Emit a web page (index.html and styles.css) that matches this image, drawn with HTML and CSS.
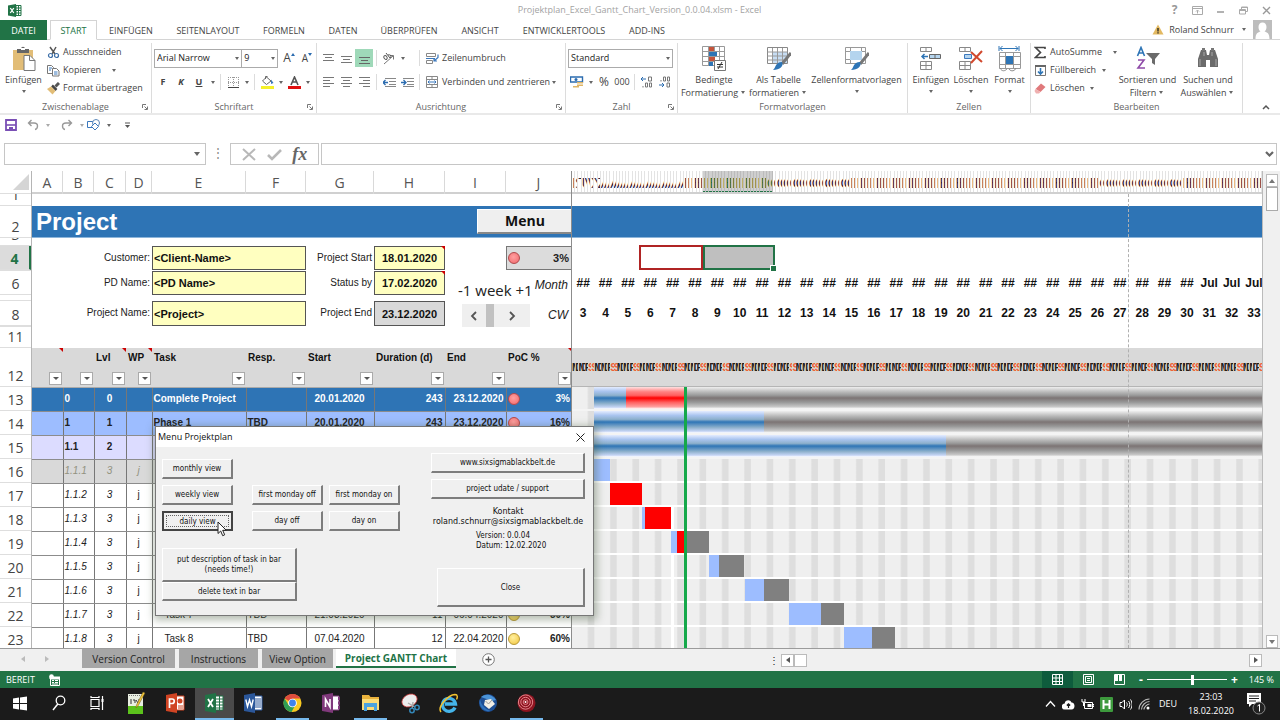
FILE: index.html
```html
<!DOCTYPE html>
<html lang="de">
<head>
<meta charset="utf-8">
<meta name="viewport" content="width=device-width, initial-scale=1">
<title>Projektplan_Excel_Gantt_Chart_Version_0.0.04.xlsm - Excel</title>
<link rel="stylesheet" href="styles.css">
</head>
<body>
<div class="app">
<header class="titlebar">
  <svg class="logo" width="14" height="13" viewBox="0 0 14 13"><path d="M8 1.500h5v10H8z" fill="#fff" stroke="#217346"/><path d="M8 4h5M8 6.500h5M8 9h5M10.500 2v9" stroke="#217346"/><path d="M0 1.500 8 0v13L0 11.500z" fill="#217346"/><path d="m2.300 4 3.500 5M5.800 4 2.300 9" stroke="#fff" stroke-width="1.300"/></svg>
  <div class="doc">Projektplan_Excel_Gantt_Chart_Version_0.0.04.xlsm - Excel</div>
  <div class="wbtns">
    <button aria-label="Hilfe">?</button>
    <button aria-label="Menüband-Anzeigeoptionen"><svg width="11" height="9" viewBox="0 0 11 9"><path d="M.5.500h10v8H.500zM.500 2.500h10M5.500 7.500v-3M4 5.500l1.500-1.500L7 5.500" fill="none" stroke="#aaa"/></svg></button>
    <button aria-label="Minimieren"><svg width="9" height="9" viewBox="0 0 9 9"><path d="M1 6h7" stroke="#999" stroke-width="1.500"/></svg></button>
    <button aria-label="Wiederherstellen"><svg width="9" height="9" viewBox="0 0 9 9"><path d="M.5 3.500h6v4.500h-6zM.500 4.500h6M2.500 3V1h6v4.500H7M2.500 1.500h6" fill="none" stroke="#aaa"/></svg></button>
    <button aria-label="Schließen"><svg width="9" height="9" viewBox="0 0 9 9"><path d="m1 1 7 7M8 1 1 8" stroke="#999" stroke-width="1.400"/></svg></button>
  </div>
</header>
<nav class="tabs">
  <button class="file">DATEI</button><button class="on">START</button><button class="t1">EINFÜGEN</button><button class="t2">SEITENLAYOUT</button><button class="t3">FORMELN</button><button class="t4">DATEN</button><button class="t5">ÜBERPRÜFEN</button><button class="t6">ANSICHT</button><button class="t7">ENTWICKLERTOOLS</button><button class="t8">ADD-INS</button>
  <div class="user"><svg width="12" height="11" viewBox="0 0 12 11"><path d="M6 .5 11.500 10.500H.500z" fill="#e3b961"/><path d="M6 4v3.500M6 8.300v1.200" stroke="#222" stroke-width="1.300"/></svg><span>Roland Schnurr</span><i class="car"></i>
  <svg width="19" height="19" viewBox="0 0 19 19"><path fill="#bdbdbd" d="M0 0h19v19H0z"/><path fill="#fff" d="M9.500 2.500c2.500 0 4 1.800 4 4.500 0 2-.8 3.500-2 4.500 2.500.8 5 1.500 5 7.500h-14c0-6 2.500-6.700 5-7.500-1.200-1-2-2.500-2-4.500 0-2.700 1.500-4.500 4-4.500z"/></svg></div>
</nav>

<section class="ribbon">
  <div class="grp g1">
    <div class="body">
      <button class="big"><svg width="24" height="26" viewBox="0 0 24 26"><path d="M1 4h20v20H1z" fill="#e2bd77"/><path d="M5 3h4c0-3 4-3 4 0h4v4H5z" fill="#666"/><path d="M9 2h4v2H9z" fill="#fff"/><path d="M12 9.500h6l5 5v10H12z" fill="#fff" stroke="#777"/><path d="M17.500 9.500v5H23" fill="none" stroke="#777"/></svg><span>Einfügen</span><i class="car"></i></button>
      <div class="col">
        <button><svg width="13" height="13" viewBox="0 0 13 13"><path d="M3 1l5 7M9 1 5 8" stroke="#555" stroke-width="1.500"/><circle cx="3.500" cy="9.500" r="2" fill="none" stroke="#3b6ea8" stroke-width="1.200"/><circle cx="9.500" cy="9.500" r="2" fill="none" stroke="#3b6ea8" stroke-width="1.200"/></svg>Ausschneiden</button>
        <button><svg width="13" height="13" viewBox="0 0 13 13"><path d="M.5 1.500h4l2 2v6h-6z" fill="#fff" stroke="#777"/><path d="M2 4h3M2 6h2" stroke="#3b78bd"/><path d="M5.500 4.500h4l2.500 2.500v5H5.500z" fill="#fff" stroke="#777"/><path d="M7 8h3.500M7 10h3.500" stroke="#3b78bd"/></svg>Kopieren<i class="car far"></i></button>
        <button><svg width="13" height="13" viewBox="0 0 13 13"><path d="M12 1 8.500 4.500" stroke="#555" stroke-width="3"/><path d="m5 3.500 4.500 4.500" stroke="#444" stroke-width="2.500"/><path d="M4 4.500 8.500 9l-3 3.500L0 7z" fill="#e2bd77"/></svg>Format übertragen</button>
      </div>
    </div>
    <div class="cap">Zwischenablage<svg class="lau" width="6" height="6" viewBox="0 0 6 6"><path d="M.5 4V.500H4M2.500 2.500 5 5M5.500 2.500v3h-3" fill="none" stroke="#777"/></svg></div>
  </div>
  <div class="grp g2">
    <div class="body rows">
      <div class="line"><span class="sel w90"><select aria-label="Schriftart"><option>Arial Narrow</option></select><i class="car"></i></span><span class="sel w35"><select aria-label="Schriftgrad"><option>9</option></select><i class="car"></i></span><button class="ib aup">A<svg width="4" height="3"><path d="M0 3 2 0l2 3z" fill="#2b6cb0"/></svg></button><button class="ib adn">A<svg width="4" height="3"><path d="M0 0h4L2 3z" fill="#2b6cb0"/></svg></button></div>
      <div class="line"><button class="ib"><b>F</b></button><button class="ib"><b><em>K</em></b></button><button class="ib"><b><u>U</u></b></button><i class="car"></i><i class="sep"></i><button class="ib" aria-label="Rahmen"><svg width="11" height="11" viewBox="0 0 11 11"><path d="M.5 0v10M5.500 0v10M10.500 0v10M0 .500h11M0 5.500h11" stroke="#999" stroke-dasharray="1 1"/><path d="M0 10.500h11" stroke="#444"/></svg></button><i class="car"></i><i class="sep"></i><button class="ib" aria-label="Füllfarbe"><svg width="13" height="13" viewBox="0 0 13 13"><path d="M5.500 1 10 5 5.500 8.500 1.500 5z" fill="#fff" stroke="#666"/><path d="M4.500 3V.500h2" stroke="#666" fill="none"/><path d="M10 3.500 12.500 7 10 8z" fill="#3b78bd"/><path d="M0 10h13v3H0z" fill="#f5f12a"/></svg></button><i class="car"></i><button class="ib" aria-label="Schriftfarbe"><svg width="13" height="13" viewBox="0 0 13 13"><path d="m3 9 3.500-8L10 9M4.500 6h4" fill="none" stroke="#555" stroke-width="1.600"/><path d="M0 10h13v3H0z" fill="#e01010"/></svg></button><i class="car"></i></div>
    </div>
    <div class="cap">Schriftart<svg class="lau" width="6" height="6" viewBox="0 0 6 6"><path d="M.5 4V.500H4M2.500 2.500 5 5M5.500 2.500v3h-3" fill="none" stroke="#777"/></svg></div>
  </div>
  <div class="grp g3">
    <div class="body rows">
      <div class="line"><button class="ib" aria-label="Oben"><svg width="11" height="11"><path d="M0 1.500h11M2 4.500h7M0 7.500h11" stroke="#777"/></svg></button><button class="ib" aria-label="Mitte"><svg width="11" height="11"><path d="M0 3.500h11M2 6.500h7M0 9.500h11" stroke="#777"/></svg></button><button class="ib act" aria-label="Unten"><svg width="11" height="11"><path d="M0 4.500h11M2 7.500h7M0 10.500h11" stroke="#666"/></svg></button><i class="sep"></i><button class="ib" aria-label="Ausrichtung"><svg width="14" height="13" viewBox="0 0 14 13"><path d="M2 12 11 4M11.500 7.500V3.500H8" fill="none" stroke="#777"/><ellipse cx="3.500" cy="5.500" rx="1.500" ry="2" fill="none" stroke="#555" transform="rotate(-40 3.500 5.500)"/><path d="m4 1 4 5c2-1 1-4-2-3" fill="none" stroke="#555"/></svg></button><i class="car"></i><i class="pad8"></i><i class="sep"></i><button class="tx"><svg width="13" height="13" viewBox="0 0 13 13"><path d="M.5 1.500h9v3h-9zM.500 8.500h6v3h-6z" fill="#fff" stroke="#888"/><path d="M0 6.500h9" stroke="#3b78bd"/><path d="M12 2.500v3L8 9M8 6.500V9h3" fill="none" stroke="#3b78bd" stroke-width="1.200"/></svg>Zeilenumbruch</button></div>
      <div class="line"><button class="ib" aria-label="Links"><svg width="11" height="11"><path d="M0 .5h11M0 3.500h7M0 6.500h11M0 9.500h7" stroke="#777"/></svg></button><button class="ib" aria-label="Zentriert"><svg width="11" height="11"><path d="M0 .5h11M2 3.500h7M0 6.500h11M2 9.500h7" stroke="#777"/></svg></button><button class="ib" aria-label="Rechts"><svg width="11" height="11"><path d="M0 .5h11M4 3.500h7M0 6.500h11M4 9.500h7" stroke="#777"/></svg></button><i class="sep"></i><button class="ib" aria-label="Einzug verkleinern"><svg width="13" height="11" viewBox="0 0 13 11"><path d="M2 1.500h11M6 4.500h7M6 7.500h7M2 9.500h11" stroke="#888"/><path d="M0 5.500h5M2.500 3 0 5.500 2.500 8" fill="none" stroke="#2b6cb0" stroke-width="1.300"/></svg></button><button class="ib" aria-label="Einzug vergrößern"><svg width="13" height="11" viewBox="0 0 13 11"><path d="M2 1.500h11M6 4.500h7M6 7.500h7M2 9.500h11" stroke="#888"/><path d="M0 5.500h5M2.500 3 5 5.500 2.500 8" fill="none" stroke="#2b6cb0" stroke-width="1.300"/></svg></button><i class="sep"></i><button class="tx"><svg width="13" height="13" viewBox="0 0 13 13"><path d="M.5.500h11v11H.500zM.500 3.500h11M.500 8.500h11M6 .500v3M6 8.500v3" fill="none" stroke="#888"/><path d="M2 6h8M3.500 4.500 2 6l1.500 1.500M8.500 4.500 10 6 8.500 7.500" fill="none" stroke="#3b78bd"/></svg>Verbinden und zentrieren</button><i class="car"></i></div>
    </div>
    <div class="cap">Ausrichtung<svg class="lau" width="6" height="6" viewBox="0 0 6 6"><path d="M.5 4V.500H4M2.500 2.500 5 5M5.500 2.500v3h-3" fill="none" stroke="#777"/></svg></div>
  </div>
  <div class="grp g4">
    <div class="body rows">
      <div class="line"><span class="sel w105"><select aria-label="Zahlenformat"><option>Standard</option></select><i class="car"></i></span></div>
      <div class="line"><button class="ib" aria-label="Währung"><svg width="14" height="13" viewBox="0 0 14 13"><path d="M.5 1h12v5H.500z" fill="#fff" stroke="#2b6cb0" stroke-width="1.400"/><circle cx="6" cy="3.500" r="1.500" fill="#2b6cb0"/><path d="M7 6h6v1.500H7zM7 8.500h6V10H7zM3 10h6v1.500H3z" fill="#dfb566"/></svg></button><i class="car"></i><button class="ib pct">%</button><button class="ib zz">000</button><i class="sep"></i><button class="ib" aria-label="Dezimalstelle hinzufügen"><svg width="12" height="12" viewBox="0 0 12 12"><path d="M0 3h5M2 1 0 3l2 2" stroke="#2b6cb0" fill="none"/><path d="M7.500 1h3v4h-3zM4.500 7h2v4h-2zM8.500 7h2v4h-2zM2 10v1.500" fill="none" stroke="#777"/></svg></button><button class="ib" aria-label="Dezimalstelle löschen"><svg width="12" height="12" viewBox="0 0 12 12"><path d="M0 9h5M3 7l2 2-2 2" stroke="#2b6cb0" fill="none"/><path d="M4.500 1h2v4h-2zM8.500 1h2v4h-2zM8 7h2.500v4H8zM2 4v1.500" fill="none" stroke="#777"/></svg></button></div>
    </div>
    <div class="cap">Zahl<svg class="lau" width="6" height="6" viewBox="0 0 6 6"><path d="M.5 4V.500H4M2.500 2.500 5 5M5.500 2.500v3h-3" fill="none" stroke="#777"/></svg></div>
  </div>
  <div class="grp g5">
    <div class="body">
      <button class="big w65"><svg width="24" height="26" viewBox="0 0 24 26"><path d="M.5.500h22v19H.500zM.500 5.500h22M.500 10.500h22M.500 15.500h22M6.500.500v19M12.500.500v19M17.500.500v19" fill="#fff" stroke="#999"/><path d="M7 1h5v4H7zM7 11h6v4H7z" fill="#c5533a"/><path d="M7 6h8v4H7zM7 16h4v4H7z" fill="#2e75b6"/><path d="M12.500 14.500h11v10h-11z" fill="#fff" stroke="#777"/><path d="M15 18.500h6M15 21h6M20 16l-4 7" stroke="#333"/></svg><span>Bedingte<br>Formatierung<i class="car"></i></span></button>
      <button class="big w64"><svg width="24" height="26" viewBox="0 0 24 26"><path d="M.5 1.500h20v16H.500z" fill="#fff" stroke="#888"/><path d="M5 6h15v11H5z" fill="#c7ddf3"/><path d="M.5 6h20M.500 10h20M.500 14h20M5.500 2v15M10.500 2v15M15.500 2v15" stroke="#999" fill="none"/><path d="M24 7 15 18" stroke="#777" stroke-width="3"/><path d="M15 16c2 4-2 8-9 8 3-2 2-8 9-8z" fill="#2e75b6"/></svg><span>Als Tabelle<br>formatieren<i class="car"></i></span></button>
      <button class="big w92"><svg width="24" height="26" viewBox="0 0 24 26"><path d="M.5 1.500h20v16H.500zM.500 5.500h20M.500 13.500h20M5.500 2v15M16.500 2v15" fill="#fff" stroke="#999"/><path d="M5 5h12v9H5z" fill="#b4d4ee"/><path d="M24 7 15 18" stroke="#777" stroke-width="3"/><path d="M15 16c2 4-2 8-9 8 3-2 2-8 9-8z" fill="#2e75b6"/></svg><span>Zellenformatvorlagen</span><i class="car"></i></button>
    </div>
    <div class="cap">Formatvorlagen</div>
  </div>
  <div class="grp g6">
    <div class="body">
      <button class="big w40"><svg width="22" height="26" viewBox="0 0 22 26"><path d="M.5 1.500h11v4H.500zM6 1.500v4M.500 15.500h11v8H.500zM.500 19.500h11M6 15.500v8" fill="#fff" stroke="#888"/><path d="M9.500 8.500h11v4h-11zM15 8.500v4" fill="#b4d4ee" stroke="#666"/><path d="M2 10.500h6M4.500 8 2 10.500 4.500 13" fill="none" stroke="#2e75b6" stroke-width="1.500"/></svg><span>Einfügen</span><i class="car"></i></button>
      <button class="big w40"><svg width="24" height="26" viewBox="0 0 24 26"><path d="M.5 1.500h11v4H.500zM6 1.500v4M.500 15.500h11v8H.500zM.500 19.500h11M6 15.500v8" fill="#fff" stroke="#888"/><path d="M5.500 8.500h7v4h-7z" fill="#b4d4ee" stroke="#3b78bd"/><path d="m12 6 11 10M23 5 12 17" stroke="#d1492e" stroke-width="2"/></svg><span>Löschen</span><i class="car"></i></button>
      <button class="big w38"><svg width="24" height="26" viewBox="0 0 24 26"><path d="M2 2.500h18M4.500 0 2 2.500 4.500 5M17.500 0 20 2.500 17.500 5M1 0v5M21 0v5" fill="none" stroke="#2e75b6"/><path d="M1.500 6.500h21v16h-21zM1.500 10.500h21M1.500 18.500h21M7.500 6.500v16M15.500 6.500v16" fill="#fff" stroke="#999"/><path d="M8 10h7v8H8z" fill="#2e75b6"/><path d="M2 22c2 4 5 3 7 1M11 23c2 3 6 2 7-1" fill="none" stroke="#888"/></svg><span>Format</span><i class="car"></i></button>
    </div>
    <div class="cap">Zellen</div>
  </div>
  <div class="grp g7">
    <div class="body">
      <div class="col w84">
        <button><svg width="13" height="13" viewBox="0 0 13 13"><path d="M11 3V1.500H1.500L6.500 6.500l-5 5H11V10" fill="none" stroke="#444" stroke-width="1.600"/></svg>AutoSumme<i class="car far"></i></button>
        <button><svg width="13" height="13" viewBox="0 0 13 13"><path d="M1.500 1.500h10v10h-10z" fill="#fff" stroke="#777"/><path d="M1 1h11v2H1z" fill="#666"/><path d="M6.500 4v6M4 7.500 6.500 10 9 7.500" fill="none" stroke="#2e75b6" stroke-width="1.600"/></svg>Füllbereich<i class="car"></i></button>
        <button><svg width="13" height="13" viewBox="0 0 13 13"><path d="M7 1.500 11.500 5 6.500 10 1.500 7z" fill="#e0797b"/><path d="m1.500 7 5 3-1.500 1.500H2L.500 9z" fill="#efb0b0"/></svg>Löschen<i class="car"></i></button>
      </div>
      <button class="big w64"><svg width="24" height="26" viewBox="0 0 24 26"><path d="M1.500 10 5 1.500 8.500 10M3 7h4" fill="none" stroke="#2e75b6" stroke-width="1.600"/><path d="M2 14h6L2 22h7" fill="none" stroke="#8e4ba8" stroke-width="1.600"/><path d="M10 7h14l-5 6v6l-3-2v-4z" fill="#6b6b6b"/></svg><span>Sortieren und<br>Filtern<i class="car"></i></span></button>
      <button class="big w56"><svg width="22" height="26" viewBox="0 0 22 26"><path d="M4 4h5l1 5h2l1-5h5l3 9v8h-8v-7h-4v7H1v-8z" fill="#6b6b6b"/><path d="M5 2h3v3H5zM14 2h3v3h-3z" fill="#777"/><path d="M3 13v7M19 13v7M7 6v4M15 6v4" stroke="#aaa"/></svg><span>Suchen und<br>Auswählen<i class="car"></i></span></button>
    </div>
    <div class="cap">Bearbeiten</div>
  </div>
  <button class="fold" aria-label="Menüband reduzieren"><svg width="8" height="6" viewBox="0 0 8 6"><path d="m1 5 3-3 3 3" fill="none" stroke="#555" stroke-width="1.500"/></svg></button>
</section>

<div class="qat">
  <button aria-label="Speichern"><svg width="12" height="12" viewBox="0 0 12 12"><path d="M1 1h10v10H1z" fill="#fff" stroke="#7a4fb5" stroke-width="1.800"/><path d="M1 6h10" stroke="#7a4fb5" stroke-width="1.600"/><path d="M4 8h4v3H4z" fill="#7a4fb5"/></svg></button>
  <button class="wide" aria-label="Rückgängig"><svg width="12" height="12" viewBox="0 0 12 12"><path d="M4.500 1 1.500 4l3 3M2 4h5c5 0 4 6 1 6.500" fill="none" stroke="#999" stroke-width="1.400"/></svg></button><i class="car lt"></i>
  <button class="wide" aria-label="Wiederholen"><svg width="12" height="12" viewBox="0 0 12 12"><path d="M7.500 1l3 3-3 3M10 4H5c-5 0-4 6-1 6.500" fill="none" stroke="#999" stroke-width="1.400"/></svg></button><i class="car lt"></i>
  <button aria-label="Formen"><svg width="14" height="12" viewBox="0 0 14 12"><path d="M.5 2.500h7v6h-7z" fill="#fff" stroke="#3b78bd"/><circle cx="9" cy="4" r="3.500" fill="#fff" stroke="#5a86b8"/><path d="m8 4 3.500 3.500L8 11 4.500 7.500z" fill="#fff" stroke="#3b78bd"/></svg></button><i class="car"></i>
  <button aria-label="Symbolleiste anpassen" class="wide"><svg width="7" height="7" viewBox="0 0 7 7"><path d="M1 1h5" stroke="#555"/><path d="M1 3h5L3.500 6z" fill="#555"/></svg></button>
</div>

<div class="fbar">
  <span class="nbox"><input aria-label="Namenfeld"><i class="car big4"></i></span>
  <span class="dots">⋮</span>
  <span class="fx"><button aria-label="Abbrechen"><svg width="14" height="13" viewBox="0 0 14 13"><path d="m1 1 12 11M13 1 1 12" stroke="#b8b8b8" stroke-width="2"/></svg></button><button aria-label="Eingeben"><svg width="15" height="13" viewBox="0 0 15 13"><path d="m1 7 4 4L14 2" fill="none" stroke="#b8b8b8" stroke-width="2.600"/></svg></button><button class="fxi">fx</button></span>
  <span class="finp"><input aria-label="Bearbeitungsleiste"><svg width="9" height="7" viewBox="0 0 9 7"><path d="m1 1 3.500 3.500L8 1" fill="none" stroke="#666" stroke-width="2.200"/></svg></span>
</div>

<main class="sheet">
  <div class="rh">
    <div class="corner"><svg width="16" height="16" viewBox="0 0 16 16"><path d="M16 0v16H0z" fill="#d5d5d5"/></svg></div>
    <div class="h12">1</div><div class="h32">2</div><div class="h8">3</div><div class="h24 cur">4</div><div class="h1"></div><div class="h24">6</div><div class="h6">7</div><div class="h25">8</div><div class="h1"></div><div class="h21">11</div><div class="h39">12</div>
    <div class="h24">13</div><div class="h24">14</div><div class="h24">15</div><div class="h24">16</div><div class="h24">17</div><div class="h24">18</div><div class="h24">19</div><div class="h24">20</div><div class="h24">21</div><div class="h24">22</div><div class="h24">23</div>
  </div>
  <div class="left">
    <div class="ch"><span>A</span><span>B</span><span>C</span><span>D</span><span>E</span><span>F</span><span>G</span><span>H</span><span>I</span><span>J</span></div>
    <div class="row1"></div>
    <div class="band"><h1>Project</h1><button class="menu">Menu</button></div>
    <div class="form">
      <label for="cu" class="r4">Customer:</label><input id="cu" class="r4 fe" value="&lt;Client-Name&gt;">
      <label for="ps" class="r4 c3">Project Start</label><span class="r4 c4 note"><input id="ps" value="18.01.2020"></span>
      <div class="r4 kpi"><i class="ball"></i><b>3%</b></div>
      <label for="pd" class="r6">PD Name:</label><input id="pd" class="r6 fe" value="&lt;PD Name&gt;">
      <label for="st" class="r6 c3">Status by</label><span class="r6 c4 note"><input id="st" value="17.02.2020"></span>
      <em class="r6 c6">Month</em>
      <label for="pn" class="r8">Project Name:</label><input id="pn" class="r8 fe" value="&lt;Project&gt;">
      <label for="pe" class="r8 c3">Project End</label><span class="r8 c4"><input id="pe" class="gr" value="23.12.2020"></span>
      <em class="r8 c6">CW</em>
      <div class="week"><span>-1 week +1</span><div class="spin"><button aria-label="-1"><svg width="8" height="10" viewBox="0 0 8 10"><path d="M6 1 2 5l4 4" fill="none" stroke="#555" stroke-width="1.800"/></svg></button><i></i><button class="fw" aria-label="+1"><svg width="8" height="10" viewBox="0 0 8 10"><path d="m2 1 4 4-4 4" fill="none" stroke="#555" stroke-width="1.800"/></svg></button></div></div>
    </div>
    <table class="data">
      <colgroup><col class="cA"><col class="cB"><col class="cC"><col class="cD"><col class="cE"><col class="cF"><col class="cG"><col class="cH"><col class="cI"><col class="cJ"></colgroup>
      <thead><tr>
        <th class="note"><div><span></span><button aria-label="Filter A"></button></div></th><th><div><span></span><button aria-label="Filter B"></button></div></th><th class="note"><div><span>Lvl</span><button aria-label="Filter Lvl"></button></div></th><th class="note"><div><span>WP</span><button aria-label="Filter WP"></button></div></th><th><div><span>Task</span><button aria-label="Filter Task"></button></div></th><th><div><span>Resp.</span><button aria-label="Filter Resp."></button></div></th><th><div><span>Start</span><button aria-label="Filter Start"></button></div></th><th><div><span>Duration (d)</span><button aria-label="Filter Duration"></button></div></th><th><div><span>End</span><button aria-label="Filter End"></button></div></th><th class="note"><div><span>PoC %</span><button aria-label="Filter PoC"></button></div></th>
      </tr></thead>
      <tbody id="rows"></tbody>
    </table>
  </div>
  <div class="chart">
    <div class="days names" id="names"></div>
    <div class="row1"></div>
    <div class="band"></div>
    <div class="selrow"><i class="redbox"></i><i class="greenbox"></i></div>
    <div class="weeks" id="months"></div>
    <div class="weeks cw" id="cws"></div>
    <div class="days wd" id="wd"></div>
    <div class="bars" id="bars"></div>
    <i class="pagebreak"></i>
  </div>
  <div class="vs"><button aria-label="Nach oben"><i class="up"></i></button><i class="thumb"></i><span></span><button aria-label="Nach unten"><i class="down"></i></button></div>

  <section class="dlg" role="dialog" aria-label="Menu Projektplan">
    <header><span>Menu Projektplan</span><button aria-label="Schließen"><svg width="9" height="9" viewBox="0 0 9 9"><path d="m.5.500 8 8M8.500.500l-8 8" stroke="#222"/></svg></button></header>
    <div class="dbody">
      <div class="dl">
        <div class="vgrid"><button class="v1">monthly view</button><button class="v1">weekly view</button><button>first monday off</button><button>first monday on</button><button class="v1 foc">daily view</button><button>day off</button><button>day on</button></div>
        <button class="put">put description of task in bar<br>(needs time!)</button>
        <button class="del">delete text in bar</button>
      </div>
      <div class="dr">
        <button class="lnk">www.sixsigmablackbelt.de</button>
        <button class="lnk">project udate / support</button>
        <p class="kon">Kontakt<br>roland.schnurr@sixsigmablackbelt.de</p>
        <p class="ver">Version: 0.0.04<br>Datum: 12.02.2020</p>
        <button class="close">Close</button>
      </div>
    </div>
    <svg class="cursor" width="11" height="16" viewBox="0 0 11 16"><path d="M1 1v11.500l2.700-2.500 2 4.700 2-.9-2-4.500h3.600z" fill="#fff" stroke="#222"/></svg>
  </section>
</main>

<nav class="stabs">
  <span class="arr"><i class="la"></i><i class="ra"></i></span>
  <button class="s1">Version Control</button><button class="s2">Instructions</button><button class="s3">View Option</button><button class="s4 on">Project GANTT Chart</button>
  <button class="plus" aria-label="Neues Blatt"><svg width="13" height="13" viewBox="0 0 13 13"><circle cx="6.500" cy="6.500" r="5.800" fill="#fff" stroke="#777"/><path d="M6.500 3.500v6M3.500 6.500h6" stroke="#555" stroke-width="1.300"/></svg></button>
  <div class="hs"><span>⋮</span><button aria-label="Nach links"><i class="la dk"></i></button><i class="ht"></i><span class="grow"></span><button aria-label="Nach rechts"><i class="ra dk"></i></button></div>
</nav>

<footer class="status">
  <span>BEREIT</span>
  <svg width="11" height="12" viewBox="0 0 11 12"><path d="M1.500 3.500h9v8h-9z" fill="none" stroke="#fff"/><path d="M1 3h10v2H1zM3 6.500h2M6 6.500h3M3 8.500h2M6 8.500h3M3 10h6" fill="#fff" stroke="#fff"/><circle cx="2.500" cy="2.500" r="2.300" fill="#fff"/></svg>
  <div class="views">
    <button class="on" aria-label="Normal"><svg width="11" height="11"><path d="M.5.500h10v10H.500zM.500 4h10M.500 7.500h10M4 .500v10M7.500.500v10" fill="none" stroke="#fff"/></svg></button>
    <button aria-label="Seitenlayout"><svg width="11" height="11"><path d="M.5.500h10v10H.500zM2.500 2.500h6v6h-6zM4 4.500h3M4 6.500h3" fill="none" stroke="#fff"/></svg></button>
    <button aria-label="Umbruchvorschau"><svg width="11" height="11"><path d="M.5.500h10v10H.500z" fill="none" stroke="#fff"/><path d="M1 1h3v6H1zM5 1h3v6H5z" fill="#fff"/></svg></button>
  </div>
  <label class="zoom"><span>-</span><input type="range" min="10" max="280" value="165" aria-label="Zoom"><span>+</span></label>
  <span class="pc">145 %</span>
</footer>

<footer class="task">
  <button aria-label="Start"><svg width="14" height="15" viewBox="0 0 14 15"><path d="M0 2.500 6 1.600V7H0zM7 1.400 14 .5V7H7zM0 8h6v5.400l-6-.9zM7 8h7v6.500l-7-1z" fill="#fff"/></svg></button>
  <button aria-label="Suchen"><svg width="14" height="16" viewBox="0 0 14 16"><circle cx="8.500" cy="5.500" r="4.300" fill="none" stroke="#fff" stroke-width="1.300"/><path d="M5.800 9 1 15" stroke="#fff" stroke-width="1.500"/></svg></button>
  <button aria-label="Taskansicht"><svg width="15" height="14" viewBox="0 0 15 14"><path d="M1 3.500h8v7H1zM1 0v1.500h8V0M1 14v-1.500h8V14M12.500 0v14" fill="none" stroke="#fff" stroke-width="1.200"/><path d="M11.500 3h2v3h-2z" fill="#fff"/></svg></button>
  <button aria-label="Notepad++"><svg width="19" height="24" viewBox="0 0 19 24"><path d="M1 3h15v20H1z" fill="#e9efe2"/><path d="M1 15h15v8H1z" fill="#5cc21c"/><path d="M2 4.500h13" stroke="#777" stroke-dasharray="1 1"/><path d="M4 8v5M6 9h2v3M9 9l2 3M12 8v4" stroke="#333" fill="none"/><path d="m18 2-7 13-2 2 .5-3L16 1z" fill="#f3c53a" stroke="#6a5a20" stroke-width=".5"/></svg></button>
  <button aria-label="PowerPoint"><svg width="19" height="20" viewBox="0 0 19 20"><path d="M10 3h8v14h-8z" fill="#fff" stroke="#d04423"/><circle cx="14" cy="8" r="2.500" fill="#d04423"/><path d="M12 13h5M12 15h5" stroke="#d04423"/><path d="M0 2 11 0v20L0 18z" fill="#d04423"/><path d="M3.500 15V6h2.500c3 0 3 4.500 0 4.500H4" fill="none" stroke="#fff" stroke-width="1.700"/></svg></button>
  <button class="run cur" aria-label="Excel"><svg width="19" height="20" viewBox="0 0 19 20"><path d="M10 3h8v14h-8z" fill="#fff" stroke="#217346"/><path d="M11 6h7M11 9h7M11 12h7M11 15h7M14.500 3v14" stroke="#217346"/><path d="M0 2 11 0v20L0 18z" fill="#217346"/><path d="m3 6 5 8M8 6l-5 8" stroke="#fff" stroke-width="1.800"/></svg></button>
  <button aria-label="Word"><svg width="19" height="20" viewBox="0 0 19 20"><path d="M10 3h8v14h-8z" fill="#fff" stroke="#2b579a"/><path d="M11 6h6M11 8h6M11 10h6M11 12h6M11 14h6" stroke="#2b579a"/><path d="M0 2 11 0v20L0 18z" fill="#2b579a"/><path d="m1.800 6.500 1.700 7 2-6.500 2 6.500 1.700-7" fill="none" stroke="#fff" stroke-width="1.400"/></svg></button>
  <button class="run" aria-label="Chrome"><svg width="19" height="20" viewBox="0 0 20 20"><circle cx="10" cy="10" r="9.500" fill="#f9c921"/><path d="M10 10 1.700 5.300A9.500 9.500 0 0 1 18.300 5.300H10z" fill="#dd4b3e"/><path d="M1.700 5.300A9.500 9.500 0 0 0 9 19.500l4-7.500-3 2.500-4.200-2.300z" fill="#2f9e55"/><circle cx="10" cy="10" r="4.600" fill="#fff"/><circle cx="10" cy="10" r="3.600" fill="#3f83ee"/></svg></button>
  <button aria-label="OneNote"><svg width="19" height="20" viewBox="0 0 19 20"><path d="M10 3h7v14h-7z" fill="#fff" stroke="#80397b"/><path d="M16 4h2v3h-2zM16 8.500h2v3h-2zM16 13h2v3h-2z" fill="#80397b"/><path d="M0 2 11 0v20L0 18z" fill="#80397b"/><path d="M3.500 14V6L8 14V6" fill="none" stroke="#fff" stroke-width="1.600"/></svg></button>
  <button class="run" aria-label="Explorer"><svg width="19" height="18" viewBox="0 0 19 18"><path d="M1 1h7l1.500 2H18v13H1z" fill="#e9b23c"/><path d="M1 5h17v11H1z" fill="#fbdc78"/><path d="M3 9h13v8h-3v-4H6v4H3z" fill="#4aa2df"/></svg></button>
  <button aria-label="Snipping Tool"><svg width="20" height="21" viewBox="0 0 20 21"><ellipse cx="9.500" cy="7.500" rx="8" ry="6" fill="#ececec" stroke="#c33" stroke-width=".7" transform="rotate(-28 9.500 7.500)"/><path d="m8 10 7 4M13 9l-1 7" stroke="#aaa" stroke-width="1.400"/><circle cx="12" cy="17.500" r="2.200" fill="none" stroke="#3487b8" stroke-width="1.500"/><circle cx="17" cy="14.500" r="2.200" fill="none" stroke="#3487b8" stroke-width="1.500"/></svg></button>
  <button aria-label="Internet Explorer"><svg width="20" height="21" viewBox="0 0 20 21"><path d="M16 14.500A6.500 6.500 0 1 1 16.500 11H6" fill="none" stroke="#45b5ea" stroke-width="3.300"/><path d="M2 19C-2 14 9 2 16 1.500c3 0 2.500 3 1.500 5" fill="none" stroke="#f2c230" stroke-width="1.500"/></svg></button>
  <button aria-label="Thunderbird"><svg width="20" height="20" viewBox="0 0 20 20"><circle cx="10" cy="10" r="9" fill="#1d4e94"/><path d="M3 4c5-4 12-2 15 3l-4 1z" fill="#4b93d6"/><path d="m7 7 6-1 4 5-6 5-5-4z" fill="#f2efe6"/><path d="m7.500 8 3 3 3.500-4" fill="none" stroke="#999"/><path d="M2 6c1 6 5 10 11 12-7 1-13-4-11-12z" fill="#2f73bd"/></svg></button>
  <button class="run" aria-label="Recorder"><svg width="19" height="20" viewBox="0 0 20 20"><circle cx="10" cy="10" r="9.500" fill="#8d1420"/><g fill="none" stroke="#e88a90"><circle cx="9" cy="9" r="7.500"/><circle cx="9" cy="9" r="5"/><circle cx="9" cy="9" r="2.500"/></g><circle cx="9" cy="9" r="1" fill="#fff"/></svg></button>
  <div class="tray">
    <svg width="11" height="8" viewBox="0 0 11 8"><path d="m1 6.500 4.500-5 4.500 5" fill="none" stroke="#fff" stroke-width="1.300"/></svg>
    <svg width="13" height="11" viewBox="0 0 13 11"><path d="M3 10.500a3 3 0 0 1-.3-6C3 1 8 0 9.500 3.500c4 0 4 7 0 7z" fill="#fff"/><path d="M6.500 9V5M4.800 6.500 6.500 4.800l1.700 1.700" fill="none" stroke="#1b1b1b" stroke-width="1.200"/></svg>
    <svg width="13" height="11" viewBox="0 0 13 11"><path d="M3.500 3.500h8v6h-8zM12 5.500h1v2h-1M1 0v3h3V0M2.500 3v4" fill="none" stroke="#fff"/><path d="M6.500 5h4v3h-4z" fill="#fff"/></svg>
    <svg width="13" height="15" viewBox="0 0 13 15"><rect width="13" height="15" rx="1" fill="#3d9a3d"/><path d="M3.500 3v9M9.500 3v9M3.500 7.500h6" stroke="#fff" stroke-width="2"/></svg>
    <svg width="13" height="13" viewBox="0 0 13 13"><path d="M1 4.500h2l2.500-2.500v9L3 8.500H1zM7.500 4.500c1 1 1 3 0 4M9.500 3c1.700 2 1.700 5 0 7M11.500 1.500c2 3 2 7 0 10" fill="none" stroke="#fff"/></svg>
    <svg width="12" height="12" viewBox="0 0 12 12"><path d="M1 11.500C1 6 6 1 11.500 1M3.500 11.500c0-4 4-8 8-8M6 11.500C6 9 9 6 11.500 6" fill="none" stroke="#bbb" stroke-width="1.100"/><circle cx="10" cy="10" r="1.500" fill="#fff"/></svg>
    <span class="lang">DEU</span>
    <span class="clock">23:03<br>18.02.2020</span>
    <svg class="msg" width="20" height="24" viewBox="0 0 20 24"><path d="M1 1h14v11H6l-3 3v-3H1z" fill="#fff"/><path d="M3 4h10M3 6.500h10M3 9h7" stroke="#222"/><circle cx="13" cy="16" r="6" fill="#222" stroke="#888"/><path d="M11.500 14 13.500 12.500V19.500" fill="none" stroke="#fff"/></svg>
  </div>
</footer>
</div>
<script src="script.js"></script>
</body>
</html>
```
FILE: styles.css
```css
*{box-sizing:border-box}
body{margin:0;background:#fff;color:#444;font:9px/12px "Open Sans","Noto Sans",sans-serif}
button,input,select{font:inherit;color:inherit;margin:0;padding:0;border:0;background:none}
input,select{min-width:0;outline:0}
select{appearance:none}
button{display:flex;align-items:center;justify-content:center}
svg{flex:none;display:block}
p,h1{margin:0}
.app{display:flex;flex-direction:column;height:100vh;overflow:hidden}

.titlebar{display:flex;height:20px;align-items:center;padding:0 2px 0 8px;color:#a3a3a3}
.doc{flex:1;text-align:center;padding-left:94px}
.wbtns{display:flex;height:18px;align-items:center}
.wbtns button{width:23px}
.wbtns button:first-child{font-size:12px;font-weight:700;color:#999}

.tabs{display:flex;height:20px;border-bottom:1px solid #d4d4d4;font-size:9px;line-height:19px}
.tabs>button{height:20px}
.tabs .file{width:47px;background:#217346;color:#fff;height:20px}
.tabs .on{width:47px;margin-left:3px;height:20px;color:#217346;background:#fff;border:1px solid #d4d4d4;border-bottom-color:#fff}
.t1{width:68px}.t2{width:86px}.t3{width:66px}.t4{width:52px}.t5{width:80px}.t6{width:62px}.t7{width:106px}.t8{width:60px}
.user{display:flex;align-items:center;gap:5px;margin-left:auto;padding-right:8px}

.car{display:inline-flex;flex:none;width:9px;justify-content:center;align-items:center}
.car::before{content:"";border:3px solid transparent;border-top-color:#666;border-bottom:0;border-left-width:2px;border-right-width:2px}
span>.car{vertical-align:2px}
.car.lt::before{border-top-color:#aaa}
.car.big4::before{border-width:4px 3px 0}

.ribbon{display:flex;flex:none;height:75px;padding-top:3px;border-bottom:2px solid #e9e9e9}
.grp{display:flex;flex-direction:column;border-right:1px solid #dcdcdc}
.body{display:flex;flex:1;padding-left:3px}
.rows{flex-direction:column;gap:6px;padding:6px 0 0 2px}
.g1{width:152px}.g2{width:165px}.g3{width:249px}.g4{width:112px}.g5{width:230px}.g6{width:123px}.g7{width:212px}
.cap{display:flex;height:13px;align-items:center;justify-content:center;color:#666;position:relative}
.lau{position:absolute;right:3px;bottom:3px}
.big{flex-direction:column;justify-content:flex-start;width:41px;padding-top:3px;line-height:13px;white-space:nowrap}
.big svg{margin-bottom:1px}
.big>.car{height:11px}
.col{display:flex;flex-direction:column;padding-left:3px}
.col button{height:18px;gap:3px;justify-content:flex-start;white-space:nowrap}
.col .far{margin-left:5px}
.line{display:flex;height:18px;align-items:center}
.ib{flex:none;width:18px;height:18px}
.act{background:#9fd9b9}
.sep{flex:none;width:1px;height:16px;background:#dcdcdc;margin:0 3px}
.pad8{width:9px}
.tx{gap:3px;padding-left:3px;white-space:nowrap}
.sel{display:flex;height:19px;border:1px solid #ababab;align-items:center;padding-left:2px;color:#222}
.sel select{flex:1}
.w90{width:89px}.w35{width:36px;border-left:0}.w105{width:105px}
.aup,.adn{font-size:12px;margin-left:2px}
.adn{font-size:10px;margin-left:0}
.ib svg[height="3"]{margin-bottom:8px}
.pct{font-size:12px}
.w65{width:66px}.w64{width:63px}.w92{width:93px}.w40{width:40px}.w38{width:37px}.w84{width:85px}.w56{width:58px}
.g7 .body{padding-left:0}
.fold{margin:auto 8px 0 auto;width:12px;height:12px}

.qat{display:flex;flex:none;height:20px;align-items:center;padding-left:3px}
.qat button{width:15px}
.qat .wide{margin-left:7px}
.qat .car{margin-left:3px}

.fbar{display:flex;flex:none;height:22px;margin:8px 3px 6px 4px}
.nbox,.fx,.finp{display:flex;align-items:center;border:1px solid #c6c6c6}
.nbox{width:202px;padding-right:4px}
.nbox input,.finp input{flex:1}
.dots{width:24px;text-align:center;line-height:20px;font-size:12px;color:#888}
.fx{width:89px;justify-content:space-evenly;margin-right:2px}
.fxi{font:italic 700 18px/18px "Liberation Serif",serif;color:#666}
.finp{flex:1;padding-right:2px}

.sheet{position:relative;display:flex;flex:1;min-height:0;overflow:hidden;font-family:"Liberation Sans Narrow","Liberation Sans",sans-serif;color:#222;border-bottom:1px solid #9b9b9b}
.rh{flex:none;width:32px;border-right:1px solid #b5b5b5;font:14px/20px "Open Sans","Noto Sans",sans-serif;color:#444}
.rh div{display:flex;align-items:flex-end;justify-content:center;overflow:hidden;border-bottom:1px solid #dedede}
.rh .corner{height:23px;justify-content:flex-end;align-items:center;padding-right:2px}
.rh .cur{background:#dcdcdc;color:#217346;font-weight:700;border-right:2px solid #217346}
.h12{height:12px}.h32{height:32px}.h8{height:8px}.h24{height:24px}.h1{height:1px}.h6{height:6px}.h25{height:25px}.h21{height:21px}.h39{height:39px}
.left{flex:none;width:540px;position:relative}
.ch{display:grid;grid-template-columns:31px 31px 32px 26px 94px 60px 68px 71px 61px 66px;height:23px;font:14px/23px "Open Sans","Noto Sans",sans-serif;text-align:center;color:#555;border-bottom:2px solid #d0d0d0}
.ch span{border-right:1px solid #d9d9d9}
.row1{height:12px}
.band{display:flex;height:32px;background:#2e74b5;align-items:center;border-bottom:1px solid #8db5da}
h1{font:700 24px/30px "Liberation Sans",sans-serif;color:#fff;padding-left:4px}
.menu{width:95px;height:25px;margin-left:auto;background:#efefef;border:1px solid #fff;border-bottom:2px solid #888;border-right:0;color:#111;font:700 14px/20px "Open Sans","Noto Sans",sans-serif}
.form{display:grid;position:relative;grid-template-columns:120px 154px 68px 71px 61px 66px;grid-template-rows:8px 24px 1px 24px 6px 25px 22px;font-size:11px;line-height:24px}
.form label,.form em{text-align:right;padding-right:2px;white-space:nowrap;font-size:10px}
.form em{padding-right:4px;grid-column:6;line-height:28px;font-size:12px}
.form>*{min-width:0}
.form input{display:block;width:100%;height:100%;border:1px solid #555;background:#ffffc0;font-weight:700;color:#111}
.form .fe{padding-left:1px}
.r4{grid-row:2}.r6{grid-row:4}.r8{grid-row:6}
.c3{grid-column:3}.c4{grid-column:4}
.c4 input{text-align:center}
.form .gr{background:#d9d9d9}
.kpi{grid-column:6;display:flex;justify-content:space-between;align-items:center;background:#dcdcdc;border:1px solid #777;border-right:0;padding:0 3px 0 1px}
.ball{flex:none;width:12px;height:12px;border-radius:50%;border:1px solid #b0494c;background:radial-gradient(circle at 45% 40%,#ffa0a0,#f0676b)}
.ball.y{border-color:#b89a3c;background:radial-gradient(circle at 40% 35%,#fff0a0,#f2c53c)}
.note{position:relative}
.note::after{content:"";position:absolute;top:0;right:0;border:2px solid #c00;border-left-color:transparent;border-bottom-color:transparent}
.week{position:absolute;left:426px;top:42px;width:80px;display:flex;flex-direction:column;gap:4px;font:15px/20px "Open Sans","Noto Sans",sans-serif;white-space:nowrap}
.spin{display:flex;width:68px;height:23px;margin-left:4px;background:#efefef;align-items:center}
.spin button{width:24px}
.spin .fw{width:44px}
.spin i{flex:none;width:8px;height:23px;background:#c1c1c1}
.spin .fw{flex:1}

.data{border-collapse:collapse;table-layout:fixed;width:540px;font-size:10px;line-height:16px}
.cA,.cB{width:31px}.cC{width:32px}.cD{width:26px}.cE{width:94px}.cF{width:60px}.cG{width:68px}.cH{width:71px}.cI{width:61px}.cJ{width:66px}
.data th{height:39px;padding:0;background:#d9d9d9;color:#111;text-align:left;border-bottom:1px solid #aaa}
.data th div{display:flex;flex-direction:column;justify-content:space-between;height:38px;padding:2px 1px 1px 2px;white-space:nowrap}
.data th span{height:16px}
.data th button{width:13px;height:13px;align-self:flex-end;background:#fff;border:1px solid #aaa}
.data th button::before{content:"";border:3px solid transparent;border-top-color:#555;border-bottom:0}
.data td{height:24px;padding:0 2px 0 1px;border:1px solid #8c8c8c;border-left-color:#777;border-top:0;border-right:0;white-space:nowrap;overflow:hidden}
.data tr>:first-child{border-left:0}
.data td:nth-child(2){font-style:italic}
.data td:nth-child(3){text-align:center;font-style:italic}
.data td:nth-child(4){text-align:center}
.data td:nth-child(5){padding-left:12px}
.data td:nth-child(7){text-align:center}
.data td:nth-child(8),.data td:nth-child(9){text-align:right;padding-right:2px}
.data .poc{display:flex;justify-content:space-between;align-items:center;font-weight:700}
.data .b td{font-weight:700;font-style:normal}
.data .b td:nth-child(5){padding-left:1px}
.data .k0 td{background:#2e74b5;color:#fff}
.data .k1 td{background:#9dbdff}
.data .k2 td{background:#dcdcff}
.data .k3 td{background:#d9d9d9;color:#929280;font-style:italic}

.chart{position:relative;flex:1;min-width:0;margin-left:-1px;overflow:hidden;border-left:1px solid #8c8c8c;border-right:1px solid #bbb;background:#fff}
.days{display:grid;grid-template-columns:repeat(216,minmax(0,1fr));overflow:hidden}
.days span{overflow:hidden}
.names{height:23px;border-bottom:2px solid #d0d0d0;font:15px/23px "Open Sans","Noto Sans",sans-serif;color:#2c2440}
.names span{border-right:1px solid #e3e3e3}
.names .sl{background:#cfcfcf;color:#1f6b33;border-color:#bbb;box-shadow:inset 0 -1px #217346}
.selrow{position:relative;height:33px}
.redbox,.greenbox{position:absolute;top:7px;height:25px;left:calc(100% * 21 / 216);width:calc(100% * 20 / 216);border:2px solid #b02424}
.greenbox{left:calc(100% * 41 / 216);width:calc(100% * 22.500 / 216);border-color:#217346;background:#bfbfbf}
.greenbox::after{content:"";position:absolute;right:-3px;bottom:-3px;width:5px;height:5px;background:#217346;border:1px solid #fff;border-right:0;border-bottom:0}
.weeks{display:flex;height:30px;font-weight:700;font-size:12px;line-height:25px;color:#111}
.weeks span{flex:0 0 calc(100% * 7 / 216);text-align:center}
.weeks.cw{height:47px}
.wd{height:39px;background:#d9d9d9;border-bottom:1px solid #b5b5b5;font:700 10px/39px "Liberation Sans Narrow","Liberation Sans",sans-serif;color:#222}
.wd .we{color:#f0603a}
.bars{position:relative}
.bar-row{position:relative;height:24px;border-bottom:2px solid #fff;background:linear-gradient(90deg,#efefef 71%,#dedede 72%) 0 0/calc(100% * 7 / 216) 100%}
.bar-row i{position:absolute;top:0;bottom:0}
.bl{background:#9dbdff}.rd{background:#fe0000}.gy{background:#808080}.wh{background:#fff}
.sum{border-bottom-color:#f4f4f4}
.sum .bl{background:linear-gradient(#e4ecff,#a9c4ef 20%,#8db0cc 38%,#2e75b6 50%,#8db0cc 75%,#c6d5f5 92%,#fff)}
.sum .rd{background:linear-gradient(#ffe0e0,#ff8080 22%,#ff6060 38%,#fe0000 50%,#ff6060 70%,#ffa0a0 90%,#fff)}
.sum .gy{background:linear-gradient(#eee,#bbb 22%,#999 38%,#7c7474 50%,#999 70%,#c8c8c8 90%,#fff)}
.today{position:absolute;top:0;bottom:0;width:3px;background:#15a84a}
.pagebreak{position:absolute;top:23px;bottom:0;left:calc(100% * 174 / 216);border-left:1px dashed #b0b0b0}
.vs{flex:none;width:17px;display:flex;flex-direction:column;align-items:center;background:#f0f0f0;padding-top:3px}
.vs button{width:12px;height:13px;border:1px solid #bbb;background:#fff}
.vs span{flex:1}
.thumb{width:12px;height:24px;background:#fff;border:1px solid #aaa}
.up,.down{border:3px solid transparent;border-bottom:4px solid #777;border-top:0}
.down{border-top:4px solid #777;border-bottom:0}

.dlg{position:absolute;left:155px;top:255px;width:439px;height:190px;background:#f0f0f0;border:1px solid #777;box-shadow:1px 2px 8px 2px rgba(70,90,60,.4);font:8px/10px "DejaVu Sans Condensed","DejaVu Sans",sans-serif;color:#111}
.dlg header{display:flex;justify-content:space-between;align-items:center;height:20px;background:#fff;padding:0 8px 0 2px;font:9px/14px "Open Sans","Noto Sans",sans-serif}
.dbody{display:flex;justify-content:space-between;padding:6px 8px 0 6px}
.dlg .dbody button{border:1px solid #fff;border-right:2px solid #7d7d7d;border-bottom:2px solid #7d7d7d;background:#f0f0f0;padding-top:1px}
.vgrid{display:grid;grid-template-columns:84px 71px 71px;column-gap:6px;row-gap:6px;grid-auto-rows:20px;padding-top:6px}
.vgrid .v1{grid-column:1;width:71px}
.dlg .dbody .foc{border:2px solid #444;outline:1px dotted #666;outline-offset:-5px}
.put{width:135px;height:34px;margin-top:17px}
.del{width:135px;height:19px}
.dr{display:flex;flex-direction:column;align-items:flex-end;width:154px;gap:6px}
.lnk{width:154px;height:20px}
.kon{align-self:center;text-align:center;font:8px/10px "DejaVu Sans",sans-serif;white-space:nowrap;margin-top:2px}
.ver{width:109px;margin-top:-2px}
.close{width:148px;height:39px;margin-top:11px}
.cursor{position:absolute;left:61px;top:94px}

.stabs{display:flex;flex:none;height:22px;background:#f0f0f0;font-size:10px;color:#222}
.stabs>button{height:19px;margin-right:4px;background:#a6a6a6;white-space:nowrap}
.arr{display:flex;width:82px;height:20px;align-items:center;gap:20px;padding-left:21px}
.la,.ra{border:3px solid transparent;border-right:4px solid #bbb;border-left:0}
.ra{border-left:4px solid #bbb;border-right:0}
.la.dk{border-right-color:#555}.ra.dk{border-left-color:#555}
.s1{width:93px}.s2{width:79px}.s3{width:71px}.s4{width:120px}
.stabs .on{margin-left:-1px;background:#fff;color:#217346;font-weight:700;border-bottom:2px solid #217346}
.stabs .plus{background:none;margin-left:22px;margin-top:1px}
.hs{display:flex;align-items:center;width:511px;margin-left:auto;padding-right:18px}
.hs span{width:12px}
.hs .grow{flex:1}
.hs button,.ht{flex:none;width:13px;height:13px;border:1px solid #bbb;background:#fff}

.status{display:flex;flex:none;height:17px;align-items:center;background:#217346;color:#fff;padding:0 6px}
.status>svg{margin-left:14px}
.views{display:flex;margin-left:auto}
.views button{width:31px;height:17px}
.views .on{background:#0e5c3d}
.zoom{display:flex;align-items:center;gap:4px;margin-left:4px;font-size:12px;font-weight:700}
.zoom input{appearance:none;width:80px;height:12px;background:linear-gradient(#fff,#fff) center/100% 1px no-repeat}
.zoom input::-webkit-slider-thumb{appearance:none;width:3px;height:10px;background:#fff}
.pc{margin-left:11px;white-space:nowrap}

.task{display:flex;flex:none;height:32px;background:#1b1b1b;color:#fff}
.task button{flex:none;width:39px;border-bottom:2px solid transparent}
.task .run{width:33px;margin:0 3px;border-color:#76b9ed}
.task .cur{width:39px;margin:0;background:#4a4a4a}
.tray{display:flex;align-items:center;gap:6px;margin-left:auto;padding-right:14px}
.lang{margin-left:3px}
.clock{text-align:center;width:52px;margin:0 3px 0 2px;line-height:14px}
```
FILE: script.js
```js
const DAYS = 216;
const FIRST_COLUMN = 18;

function columnName(n) {
  let s = '';
  while (n > 0) {
    s = String.fromCharCode(65 + (n - 1) % 26) + s;
    n = Math.floor((n - 1) / 26);
  }
  return s;
}

function add(parent, tag, cls, text) {
  const el = document.createElement(tag);
  if (cls) el.className = cls;
  if (text !== undefined) el.textContent = text;
  parent.append(el);
  return el;
}

const byId = id => document.getElementById(id);

for (let d = 0; d < DAYS; d++) {
  add(byId('names'), 'span', d >= 41 && d < 63 ? 'sl' : '', columnName(FIRST_COLUMN + d)[0]);
  add(byId('wd'), 'span', d % 7 > 4 ? 'we' : '', 'MDMDFSS'[d % 7]);
}
for (let w = 3; w <= 33; w++) {
  add(byId('months'), 'span', '', w > 30 ? 'Jul' : '##');
  add(byId('cws'), 'span', '', w);
}

const tasks = [
  ['b k0', '0', '0', '', 'Complete Project', '', '20.01.2020', '243', '23.12.2020', '3%', ''],
  ['b k1', '1', '1', '', 'Phase 1', 'TBD', '20.01.2020', '243', '23.12.2020', '16%', ''],
  ['b k2', '1.1', '2', '', '', '', '', '', '', '', ''],
  ['k3', '1.1.1', '3', 'j', '', '', '', '', '', '', ''],
  ['', '1.1.2', '3', 'j', '', '', '', '', '', '', ''],
  ['', '1.1.3', '3', 'j', '', '', '', '', '', '', ''],
  ['', '1.1.4', '3', 'j', '', '', '', '', '', '', ''],
  ['', '1.1.5', '3', 'j', '', '', '', '', '', '', ''],
  ['', '1.1.6', '3', 'j', '', '', '', '', '', '', ''],
  ['', '1.1.7', '3', 'j', 'Task 7', 'TBD', '21.03.2020', '11', '06.04.2020', '50%', 'y'],
  ['', '1.1.8', '3', 'j', 'Task 8', 'TBD', '07.04.2020', '12', '22.04.2020', '60%', 'y']
];
for (const t of tasks) {
  const tr = add(byId('rows'), 'tr', t[0]);
  add(tr, 'td');
  for (let i = 1; i < 9; i++) add(tr, 'td', '', t[i]);
  const td = add(tr, 'td');
  if (t[9]) {
    const poc = add(td, 'div', 'poc');
    add(poc, 'i', 'ball ' + t[10]);
    add(poc, 'span', '', t[9]);
  }
}

const bars = [
  [['bl', 7, 17], ['rd', 17, 35], ['gy', 35, 216]],
  [['bl', 7, 60], ['gy', 60, 216]],
  [['bl', 7, 117], ['gy', 117, 216]],
  [['bl', 7, 12]],
  [['rd', 12, 22]],
  [['bl', 22, 23], ['rd', 23, 31], ['wh', 31, 32]],
  [['bl', 31, 33], ['rd', 33, 35], ['gy', 35, 43]],
  [['wh', 31, 32], ['bl', 43, 46], ['gy', 46, 54]],
  [['wh', 31, 32], ['bl', 54, 60], ['gy', 60, 68]],
  [['wh', 31, 32], ['bl', 68, 78], ['gy', 78, 85]],
  [['wh', 31, 32], ['bl', 85, 94], ['gy', 94, 101]]
];
const pct = d => (d / DAYS * 100) + '%';
bars.forEach((list, i) => {
  const row = add(byId('bars'), 'div', i < 3 ? 'bar-row sum' : 'bar-row');
  for (const [kind, from, to] of list) {
    const bar = add(row, 'i', kind);
    bar.style.left = pct(from);
    bar.style.width = pct(to - from);
  }
});
add(byId('bars'), 'i', 'today').style.left = pct(35);
```
